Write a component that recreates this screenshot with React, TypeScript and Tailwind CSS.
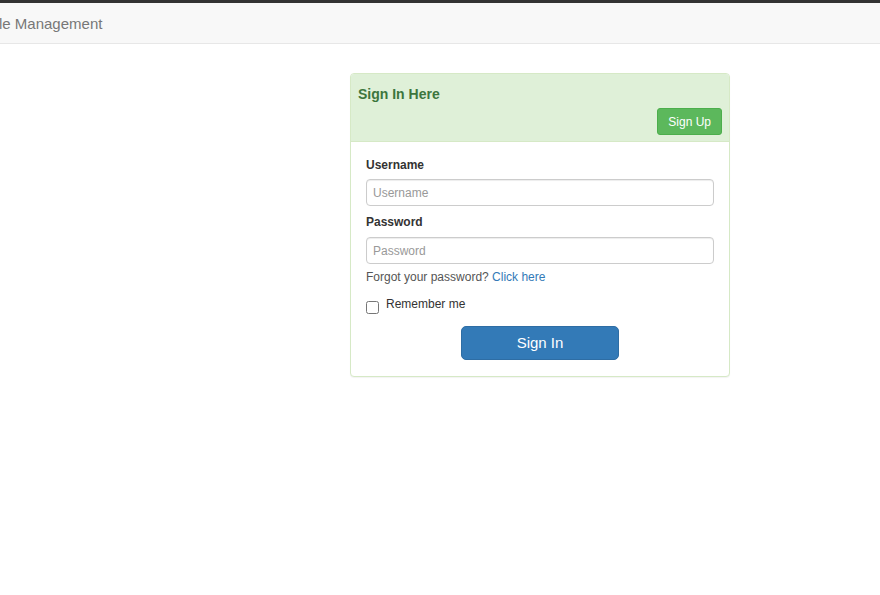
export default function App() {
  return (
    <div className="min-h-[595px] bg-white font-['Liberation_Sans',Arial,sans-serif] text-[14px] text-[#333]">
      <div className="h-[3px] bg-[#333]" />
      <nav className="flex h-[41px] items-center overflow-hidden border-b border-[#e7e7e7] bg-[#f8f8f8] pt-[3px]">
        <span className="ml-[-1px] whitespace-nowrap text-[15px] text-[#777]">le Management</span>
      </nav>

      <div className="flex pt-[29px] pl-[350px]">
        <div className="w-[380px] rounded-[4px] border border-[#d6e9c6] bg-white shadow-[0_1px_1px_rgba(0,0,0,0.05)]">
          <div className="flex flex-col rounded-t-[3px] border-b border-[#d6e9c6] bg-[#dff0d8] px-[7px] pt-[10px] pb-[6px]">
            <h3 className="text-[14px] leading-[20px] font-bold text-[#3c763d]">Sign In Here</h3>
            <div className="mt-[4px] flex justify-end">
              <button className="h-[27px] rounded-[3px] border border-[#4cae4c] bg-[#5cb85c] px-[10px] text-[12px] text-white">
                Sign Up
              </button>
            </div>
          </div>

          <div className="flex flex-col px-[15px] pt-[13px] pb-[16px]">
            <label className="mb-[4px] text-[12px] leading-[20px] font-bold">Username</label>
            <input
              placeholder="Username"
              className="h-[27px] rounded-[4px] border border-[#ccc] px-[6px] text-[12px] shadow-[inset_0_1px_1px_rgba(0,0,0,0.075)] outline-none placeholder:text-[#999]"
            />
            <label className="mt-[6px] mb-[5px] text-[12px] leading-[20px] font-bold">Password</label>
            <input
              type="password"
              placeholder="Password"
              className="h-[27px] rounded-[4px] border border-[#ccc] px-[6px] text-[12px] shadow-[inset_0_1px_1px_rgba(0,0,0,0.075)] outline-none placeholder:text-[#999]"
            />
            <p className="mt-[5px] text-[12px] leading-[17px] text-[#555]">
              Forgot your password? <a className="text-[#337ab7]">Click here</a>
            </p>
            <div className="mt-[10px] flex items-start">
              <input type="checkbox" className="mt-[5px] mb-[1px] ml-0 h-[13px] w-[13px]" />
              <span className="ml-[7px] text-[12px] leading-[17px]">Remember me</span>
            </div>
            <div className="mt-[11px] flex justify-center">
              <button className="h-[34px] w-[158px] rounded-[5px] border border-[#2e6da4] bg-[#337ab7] text-[15px] text-white">
                Sign In
              </button>
            </div>
          </div>
        </div>
      </div>
    </div>
  );
}
